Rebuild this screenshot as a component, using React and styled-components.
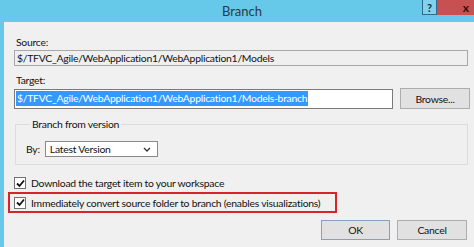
import React from 'react';
import styled, { createGlobalStyle } from 'styled-components';

const GlobalStyle = createGlobalStyle`
  html, body {
    margin: 0;
    padding: 0;
    background: #f0f0f0;
  }
  body {
    font-family: Lato, "Noto Sans", sans-serif;
    font-size: 10.4px;
    letter-spacing: -0.25px;
    color: #111;
  }
`;

const Window = styled.div`
  width: 474px;
  height: 247px;
  overflow: hidden;
  display: flex;
  flex-direction: column;
  background: #f0f0f0;
`;

const TitleBar = styled.div`
  height: 22px;
  background: #66c9ea;
  position: relative;
  display: flex;
  align-items: center;
  justify-content: center;
  padding-left: 10px;
  font-size: 13px;
  letter-spacing: 0;
  color: #2a3a44;
  flex-shrink: 0;
`;

const Controls = styled.div`
  position: absolute;
  top: 0;
  right: 0;
  display: flex;
`;

const HelpButton = styled.div`
  width: 13px;
  height: 14px;
  border: 1px solid #2e6a8c;
  border-top: none;
  background: #7fd3ee;
  display: flex;
  align-items: center;
  justify-content: center;
  font-weight: 700;
  font-size: 11px;
  color: #1a2f3c;
`;

const CloseButton = styled.div`
  width: 37px;
  height: 15px;
  background: #c75050;
  display: flex;
  align-items: center;
  justify-content: flex-end;
  padding-right: 5px;
  box-sizing: border-box;
  font-weight: 700;
  font-size: 12px;
  color: #2a1010;
`;

const Body = styled.div`
  flex: 1;
  border-left: 4px solid #66c9ea;
  padding: 12px 4px 0 10px;
  display: flex;
  flex-direction: column;
`;

const Label = styled.div`
  line-height: 16px;
  height: 16px;
  padding-left: 2px;
  margin-top: ${p => p.$top || 0}px;
`;

const ReadOnlyBox = styled.div`
  height: 16px;
  box-sizing: border-box;
  border: 1px solid #a8a8a8;
  background: #efefef;
  line-height: 14px;
  padding-left: 2px;
  margin-right: 2px;
  white-space: nowrap;
  overflow: hidden;
`;

const TargetRow = styled.div`
  display: flex;
  align-items: center;
  height: 21px;
  gap: 7px;
`;

const TextInput = styled.div`
  width: 379px;
  height: 20px;
  box-sizing: border-box;
  border: 1px solid #7a7a7a;
  background: #fff;
  display: flex;
  align-items: center;
  padding-left: 1px;
`;

const Selected = styled.span`
  background: #3399ff;
  color: #fff;
  line-height: 15px;
  padding: 0 1px;
  white-space: nowrap;
`;

const Button = styled.div`
  width: ${p => p.$width || 70}px;
  height: ${p => p.$height || 21}px;
  box-sizing: border-box;
  border: 1px solid ${p => (p.$default ? '#8aa0b8' : '#adadad')};
  background: #e1e1e1;
  display: flex;
  align-items: center;
  justify-content: center;
`;

const GroupBox = styled.fieldset`
  margin: 7px 2px 0 1px;
  padding: 0 8px 7px 10px;
  border: 1px solid #dcdcdc;
  border-radius: 0;
  height: 49px;
  box-sizing: border-box;
  display: flex;
  align-items: flex-start;
  min-width: 0;
`;

const Legend = styled.legend`
  padding: 0 2px;
  margin-left: 4px;
  line-height: 16px;
`;

const ByRow = styled.div`
  display: flex;
  align-items: center;
  gap: 5px;
  margin-top: 9px;
`;

const Select = styled.div`
  width: 113px;
  height: 16px;
  box-sizing: border-box;
  border: 1px solid #8a8a8a;
  background: #fff;
  display: flex;
  align-items: center;
  justify-content: space-between;
  padding: 0 6px 0 4px;
`;

const CheckRow = styled.div`
  display: flex;
  align-items: center;
  gap: 5px;
  height: ${p => (p.$highlight ? 17 : 20)}px;
  width: fit-content;
  margin-top: ${p => p.$top || 0}px;
  ${p =>
    p.$highlight &&
    `
    border: 2px solid #d8232a;
    margin-left: -6px;
    padding: 0 15px 0 4px;
  `}
`;

const Box = styled.div`
  width: 12px;
  height: 12px;
  box-sizing: border-box;
  border: 1px solid #707070;
  background: #fff;
  display: flex;
  align-items: center;
  justify-content: center;
`;

const Footer = styled.div`
  display: flex;
  justify-content: flex-end;
  gap: 7px;
  margin-top: 7px;
  padding-right: 3px;
`;

function Check() {
  return (
    <Box>
      <svg width="9" height="9" viewBox="0 0 9 9">
        <path d="M1 4.5 L3.5 7 L8 1.5" fill="none" stroke="#111" strokeWidth="1.8" />
      </svg>
    </Box>
  );
}

export default function App() {
  return (
    <>
      <GlobalStyle />
      <Window>
        <TitleBar>
          Branch
          <Controls>
            <HelpButton>?</HelpButton>
            <CloseButton>x</CloseButton>
          </Controls>
        </TitleBar>
        <Body>
          <Label>Source:</Label>
          <ReadOnlyBox>$/TFVC_Agile/WebApplication1/WebApplication1/Models</ReadOnlyBox>
          <Label $top={6}>Target:</Label>
          <TargetRow>
            <TextInput>
              <Selected>$/TFVC_Agile/WebApplication1/WebApplication1/Models-branch</Selected>
            </TextInput>
            <Button>Browse...</Button>
          </TargetRow>
          <GroupBox>
            <Legend>Branch from version</Legend>
            <ByRow>
              <span>By:</span>
              <Select>
                <span>Latest Version</span>
                <svg width="8" height="5" viewBox="0 0 8 5">
                  <path d="M1 1 L4 4 L7 1" fill="none" stroke="#333" strokeWidth="1.3" />
                </svg>
              </Select>
            </ByRow>
          </GroupBox>
          <CheckRow $top={8}>
            <Check />
            <span>Download the target item to your workspace</span>
          </CheckRow>
          <CheckRow $highlight $top={-1}>
            <Check />
            <span>Immediately convert source folder to branch (enables visualizations)</span>
          </CheckRow>
          <Footer>
            <Button $default $width={69} $height={20}>OK</Button>
            <Button $width={70} $height={20}>Cancel</Button>
          </Footer>
        </Body>
      </Window>
    </>
  );
}
